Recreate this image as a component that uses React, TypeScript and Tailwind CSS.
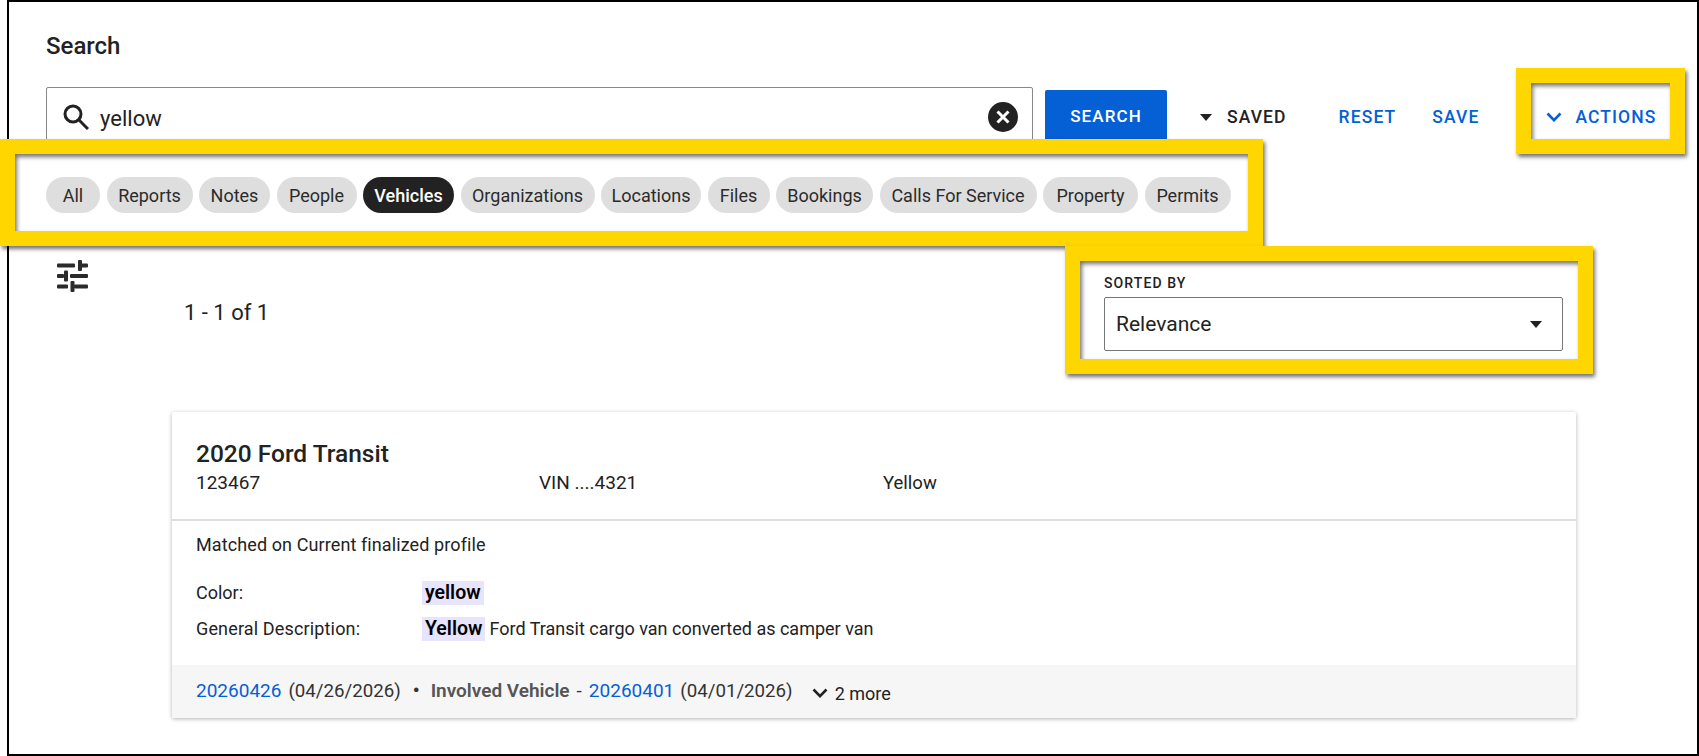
import React from "react";

const chips = [
  { label: "All", width: "w-[54px]" },
  { label: "Reports", width: "w-[86px]" },
  { label: "Notes", width: "w-[71px]" },
  { label: "People", width: "w-[80px]" },
  { label: "Vehicles", width: "w-[91px]" },
  { label: "Organizations", width: "w-[134px]" },
  { label: "Locations", width: "w-[100px]" },
  { label: "Files", width: "w-[62px]" },
  { label: "Bookings", width: "w-[97px]" },
  { label: "Calls For Service", width: "w-[157px]" },
  { label: "Property", width: "w-[95px]" },
  { label: "Permits", width: "w-[86px]" },
];

function SearchIcon() {
  return (
    <svg width="26" height="26" viewBox="0 0 26 26" fill="none" stroke="#222" strokeWidth="3">
      <circle cx="10" cy="10" r="8" />
      <path d="M16 16l9 9" />
    </svg>
  );
}

function ClearIcon() {
  return (
    <svg width="30" height="30" viewBox="0 0 30 30">
      <circle cx="15" cy="15" r="15" fill="#222" />
      <path d="M9.5 9.5l11 11M20.5 9.5l-11 11" stroke="#fff" strokeWidth="3" />
    </svg>
  );
}

function FilterIcon() {
  return (
    <svg width="32" height="32" viewBox="0 0 32 32" fill="#2b2b2b">
      <rect x="0" y="3.5" width="18" height="4" rx="1" />
      <rect x="23" y="3.5" width="8" height="4" rx="1" />
      <rect x="21" y="0" width="4" height="11" rx="1" />
      <rect x="0" y="14" width="7" height="4" rx="1" />
      <rect x="13" y="14" width="18" height="4" rx="1" />
      <rect x="7" y="10.5" width="4" height="11" rx="1" />
      <rect x="0" y="24.5" width="11" height="4" rx="1" />
      <rect x="17" y="24.5" width="14" height="4" rx="1" />
      <rect x="13.5" y="21" width="4" height="11" rx="1" />
    </svg>
  );
}

function Caret({ className }: { className?: string }) {
  return (
    <svg width="12" height="7" viewBox="0 0 12 7" className={className}>
      <path d="M0 0h12L6 7z" fill="#222" />
    </svg>
  );
}

function Chevron({ color, size = 16 }: { color: string; size?: number }) {
  return (
    <svg width={size} height={size * 0.65} viewBox="0 0 16 10.4" fill="none" stroke={color} strokeWidth="2.6">
      <path d="M1.5 1.5L8 8.2l6.5-6.7" />
    </svg>
  );
}

function Note({ className }: { className: string }) {
  return (
    <div className={`absolute pointer-events-none border-[15px] border-[#ffd600] shadow-[2px_3px_4px_rgba(0,0,0,0.55),inset_2px_3px_4px_rgba(0,0,0,0.55)] ${className}`} />
  );
}

export default function App() {
  return (
    <div className="relative w-[1699px] h-[756px] bg-white overflow-hidden font-['Roboto',sans-serif] text-[#222]">
      <div className="ml-[7px] h-full border-2 border-black pl-[37px] pr-[10px]">
        <h1 className="pt-[31px] text-[24px] leading-[26px] font-medium">Search</h1>

        <div className="mt-[28px] flex items-start h-[60px]">
          <div className="w-[987px] h-[60px] flex items-center pl-[16px] pr-[14px] border border-[#888] rounded-[2px]">
            <SearchIcon />
            <span className="ml-[11px] mt-[2px] text-[22px] flex-1">yellow</span>
            <ClearIcon />
          </div>
          <button className="ml-[12px] w-[122px] h-[54px] mt-[3px] rounded-[2px] bg-[#0560d6] text-white text-[17px] font-medium tracking-[1.1px]">SEARCH</button>
          <div className="ml-[33px] h-[60px] flex items-center text-[17.5px] font-medium tracking-[1.1px]">
            <Caret />
            <span className="ml-[15px]">SAVED</span>
            <span className="ml-[52px] text-[#0560d6]">RESET</span>
            <span className="ml-[36px] text-[#0560d6]">SAVE</span>
            <span className="ml-[67px]"><Chevron color="#0560d6" /></span>
            <span className="ml-[13px] text-[#0560d6]">ACTIONS</span>
          </div>
        </div>

        <div className="mt-[30px] flex gap-[6.5px]">
          {chips.map((chip) => (
            <span key={chip.label} className={`${chip.width} h-[36px] flex items-center justify-center rounded-[18px] text-[18px] ${chip.label === "Vehicles" ? "bg-[#222] text-white font-medium" : "bg-[#dedede] text-[#2b2b2b]"}`}>{chip.label}</span>
          ))}
        </div>

        <div className="mt-[47px] flex items-start">
          <div className="ml-[11px]"><FilterIcon /></div>
          <div className="ml-[95px] mt-[41px] text-[22px] leading-[24px]">1 - 1 of 1</div>
          <div className="ml-auto mr-[124px] mt-[15px] w-[459px]">
            <div className="text-[14px] leading-[16px] font-medium tracking-[1.1px]">SORTED BY</div>
            <div className="mt-[6px] h-[54px] border border-[#777] rounded-[2px] flex items-center justify-between pl-[11px] pr-[20px] text-[21px]">
              <span className="mt-[1px]">Relevance</span>
              <Caret />
            </div>
          </div>
        </div>

        <div className="mt-[61px] ml-[126px] w-[1404px] h-[306px] rounded-[2px] bg-white shadow-[0_1px_4px_rgba(0,0,0,0.3)] flex flex-col">
          <div className="h-[109px] px-[24px] pt-[28px] border-b-2 border-[#dedede]">
            <div className="text-[24.5px] leading-[28px] font-medium">2020 Ford Transit</div>
            <div className="mt-[3px] flex text-[19px] leading-[24px]">
              <span className="w-[343px]">123467</span>
              <span className="w-[344px]">VIN ....4321</span>
              <span className="text-[18.5px]">Yellow</span>
            </div>
          </div>
          <div className="flex-1 px-[24px] pt-[12px] text-[18px] leading-[24px]">
            <div className="tracking-[0.1px]">Matched on Current finalized profile</div>
            <div className="mt-[24px] flex">
              <span className="w-[226px]">Color:</span>
              <span className="px-[3px] bg-[#e8e4fd] text-black text-[19.5px] font-semibold">yellow</span>
            </div>
            <div className="mt-[12px] flex">
              <span className="w-[226px] tracking-[0.15px]">General Description:</span>
              <span className="px-[3px] bg-[#e8e4fd] text-black text-[19.5px] font-semibold">Yellow</span>
              <span className="ml-[4px]">Ford Transit cargo van converted as camper van</span>
            </div>
          </div>
          <div className="h-[53px] px-[24px] bg-[#f6f6f6] flex items-center text-[19px] text-[#333]">
            <span className="text-[#0560d6]">20260426</span>
            <span className="ml-[7px] text-[18.7px]">(04/26/2026)</span>
            <span className="ml-[12px] font-bold">•</span>
            <span className="ml-[11px] font-semibold text-[#555]">Involved Vehicle</span>
            <span className="ml-[7px]">-</span>
            <span className="ml-[7px] text-[#0560d6]">20260401</span>
            <span className="ml-[6px] text-[18.7px]">(04/01/2026)</span>
            <span className="ml-[19px] mt-[4px]"><Chevron color="#222" /></span>
            <span className="ml-[7px] mt-[4px] text-[18px] text-[#222]">2 more</span>
          </div>
        </div>
      </div>

      <Note className="left-0 top-[139px] w-[1263px] h-[107px]" />
      <Note className="left-[1516px] top-[68px] w-[169px] h-[86px]" />
      <Note className="left-[1065px] top-[246px] w-[528px] h-[128px]" />
    </div>
  );
}
